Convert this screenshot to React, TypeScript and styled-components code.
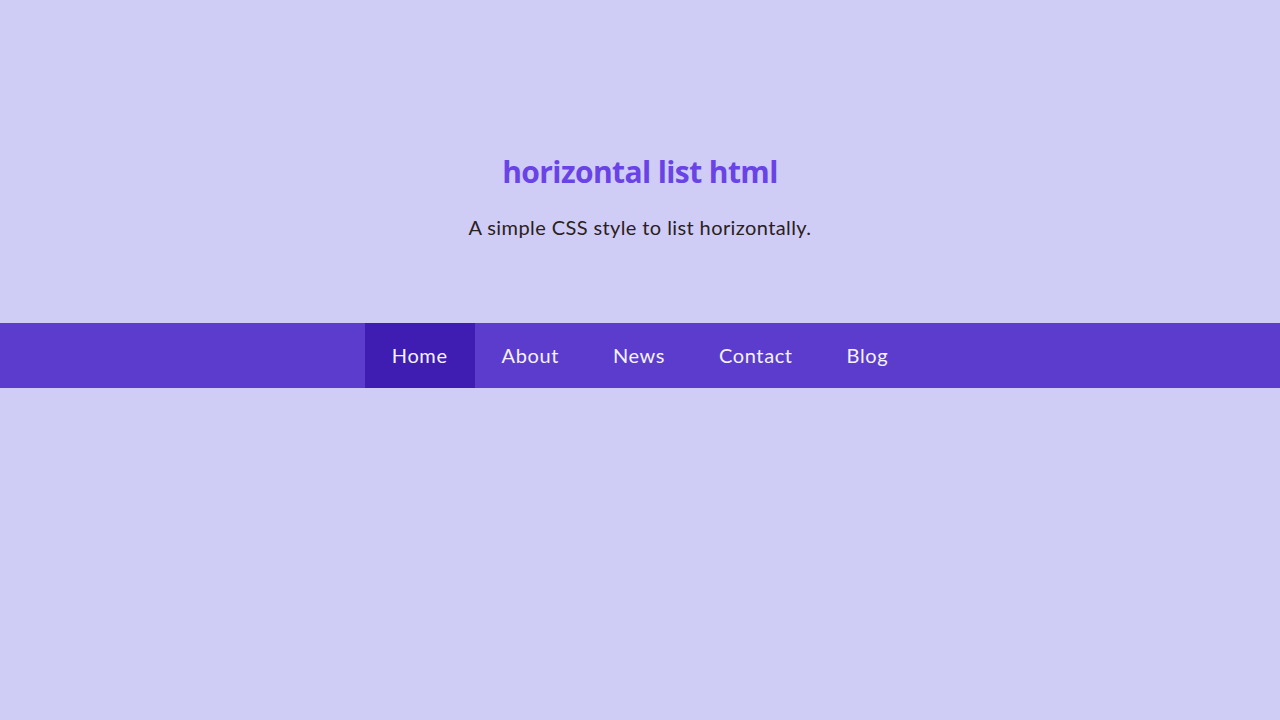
import { FC } from "react";
import styled, { createGlobalStyle } from "styled-components";

const GlobalStyle = createGlobalStyle`
  html, body {
    margin: 0;
    padding: 0;
    background: #cfcdf5;
  }
  body {
    font-family: "Lato", "Open Sans", sans-serif;
  }
`;

const StyledPage = styled.div`
  min-height: 720px;
  background: #cfcdf5;
`;

const StyledHeader = styled.header`
  height: 323px;
  display: flex;
  flex-direction: column;
  align-items: center;
  justify-content: center;
  box-sizing: border-box;
  padding-top: 66px;
`;

const StyledTitle = styled.h1`
  margin: 0;
  font-family: "Open Sans", "Noto Sans", sans-serif;
  font-weight: 700;
  font-size: 30px;
  letter-spacing: -0.6px;
  color: #6a43e6;
`;

const StyledSubtitle = styled.p`
  margin: 23px 0 0;
  font-family: "Lato", sans-serif;
  font-size: 20px;
  letter-spacing: 0.4px;
  color: #2b2020;
`;

const StyledNav = styled.nav`
  height: 65px;
  background: #5c3ccc;
`;

const StyledList = styled.ul`
  list-style: none;
  margin: 0;
  padding: 0;
  height: 100%;
  display: flex;
  justify-content: center;
`;

const StyledItem = styled.li<{ $active?: boolean }>`
  display: flex;
  align-items: center;
  padding: 0 27px 2px;
  background: ${(p) => (p.$active ? "#3f1db3" : "transparent")};
  color: #f4f2ff;
  font-family: "Lato", sans-serif;
  font-size: 20px;
  letter-spacing: 0.6px;
`;

const links = ["Home", "About", "News", "Contact", "Blog"];

const App: FC = () => {
  return (
    <StyledPage>
      <GlobalStyle />
      <StyledHeader>
        <StyledTitle>horizontal list html</StyledTitle>
        <StyledSubtitle>A simple CSS style to list horizontally.</StyledSubtitle>
      </StyledHeader>
      <StyledNav>
        <StyledList>
          {links.map((link, i) => (
            <StyledItem key={link} $active={i === 0}>
              {link}
            </StyledItem>
          ))}
        </StyledList>
      </StyledNav>
    </StyledPage>
  );
};

export default App;
